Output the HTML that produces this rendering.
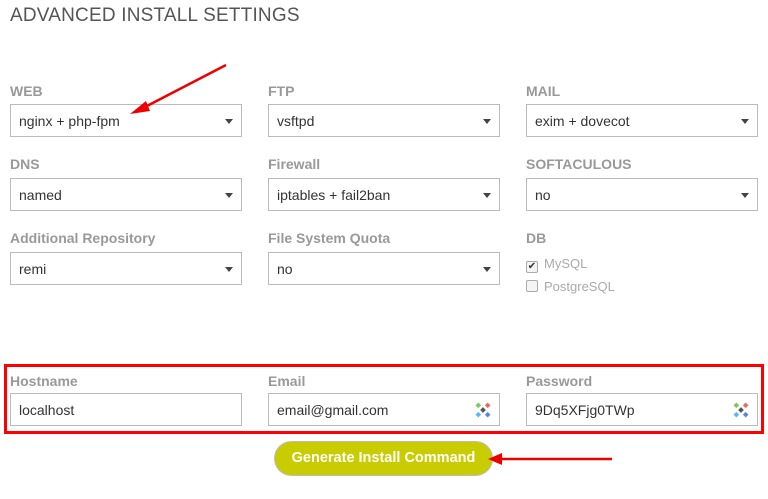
<!DOCTYPE html>
<html><head><style>
body{margin:0;width:768px;height:499px;background:#fff;font-family:"Liberation Sans",Arial,sans-serif;position:relative;overflow:hidden}
.a{position:absolute}
h1{position:absolute;left:10px;top:5px;margin:0;font-size:19px;font-weight:normal;color:#555;letter-spacing:.2px}
.l{position:absolute;font-size:14px;font-weight:bold;color:#999}
.s{position:absolute;border:1px solid #bbb;font-size:14px;color:#333;box-sizing:border-box;width:232px;height:33px;padding:8px 0 0 8px}
.s.sel::after{content:"";position:absolute;right:8px;top:14px;border-left:4px solid transparent;border-right:4px solid transparent;border-top:5px solid #444}
.cb{position:absolute;font-size:13px;color:#aaa}
.cb i{display:inline-block;width:10px;height:10px;border:1px solid #aaa;border-radius:2px;margin-right:6px;vertical-align:-1px;font-style:normal;font-size:10px;line-height:10px;color:#333;text-align:center;background:#f4f4f4}
.ic{position:absolute;right:8px;top:8px;width:16px;height:16px}
</style></head><body>
<h1>ADVANCED INSTALL SETTINGS</h1>
<div class="l" style="left:10px;top:83px">WEB</div>
<div class="l" style="left:268px;top:83px">FTP</div>
<div class="l" style="left:526px;top:83px">MAIL</div>
<div class="s sel" style="left:10px;top:104px">nginx + php-fpm</div>
<div class="s sel" style="left:268px;top:104px">vsftpd</div>
<div class="s sel" style="left:526px;top:104px">exim + dovecot</div>
<div class="l" style="left:10px;top:156px">DNS</div>
<div class="l" style="left:268px;top:156px">Firewall</div>
<div class="l" style="left:526px;top:156px">SOFTACULOUS</div>
<div class="s sel" style="left:10px;top:178px">named</div>
<div class="s sel" style="left:268px;top:178px">iptables + fail2ban</div>
<div class="s sel" style="left:526px;top:178px">no</div>
<div class="l" style="left:10px;top:230px">Additional Repository</div>
<div class="l" style="left:268px;top:230px">File System Quota</div>
<div class="l" style="left:526px;top:230px">DB</div>
<div class="s sel" style="left:10px;top:252px">remi</div>
<div class="s sel" style="left:268px;top:252px">no</div>
<div class="cb" style="left:526px;top:256px"><i>✔</i>MySQL</div>
<div class="cb" style="left:526px;top:279px"><i></i>PostgreSQL</div>
<div class="a" style="left:4px;top:364px;width:754px;height:64px;border:3px solid #f00"></div>
<div class="l" style="left:10px;top:373px">Hostname</div>
<div class="l" style="left:268px;top:373px">Email</div>
<div class="l" style="left:526px;top:373px">Password</div>
<div class="s" style="left:10px;top:393px">localhost</div>
<div class="s" style="left:268px;top:393px">email@gmail.com<svg class="ic" viewBox="0 0 12 12"><rect x="1" y="1" width="3" height="3" fill="#7c5" transform="rotate(45 2.5 2.5)"/><rect x="8" y="1" width="3" height="3" fill="#e66" transform="rotate(45 9.5 2.5)"/><rect x="4.5" y="4.5" width="3" height="3" fill="#555" transform="rotate(45 6 6)"/><rect x="1" y="8" width="3" height="3" fill="#5be" transform="rotate(45 2.5 9.5)"/><rect x="8" y="8" width="3" height="3" fill="#58d" transform="rotate(45 9.5 9.5)"/></svg></div>
<div class="s" style="left:526px;top:393px">9Dq5XFjg0TWp<svg class="ic" viewBox="0 0 12 12"><rect x="1" y="1" width="3" height="3" fill="#7c5" transform="rotate(45 2.5 2.5)"/><rect x="8" y="1" width="3" height="3" fill="#e66" transform="rotate(45 9.5 2.5)"/><rect x="4.5" y="4.5" width="3" height="3" fill="#555" transform="rotate(45 6 6)"/><rect x="1" y="8" width="3" height="3" fill="#5be" transform="rotate(45 2.5 9.5)"/><rect x="8" y="8" width="3" height="3" fill="#58d" transform="rotate(45 9.5 9.5)"/></svg></div>
<div class="a" style="left:274px;top:441px;width:219px;height:35px;border-radius:18px;background:#c9cc00;border:1px solid #bbb;box-sizing:border-box;color:#fff;font-weight:bold;font-size:14.5px;text-align:center;line-height:33px">Generate Install Command</div>
<svg class="a" style="left:0;top:0" width="768" height="499">
<line x1="226" y1="65" x2="145" y2="107" stroke="#e00" stroke-width="2.5"/>
<polygon points="130,114 146,101 150,111" fill="#e00"/>
<line x1="612" y1="459" x2="500" y2="459" stroke="#e00" stroke-width="2.5"/>
<polygon points="488,459 502,453 502,465" fill="#e00"/>
</svg>
</body></html>
